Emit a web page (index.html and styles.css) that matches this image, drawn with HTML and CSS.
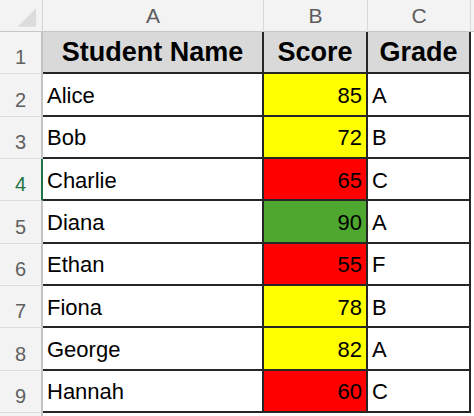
FILE: index.html
```html
<!DOCTYPE html>
<html>
<head>
<meta charset="utf-8">
<link rel="stylesheet" href="styles.css">
</head>
<body>
<div class="sheet">
  <div class="corner"><svg width="43" height="32" viewBox="0 0 43 32"><polygon points="37,8 37,27 18,27" fill="#dcdcdc"/></svg></div>
  <div class="colhead">A</div>
  <div class="colhead">B</div>
  <div class="colhead">C</div>
  <div class="colhead gut"></div>

  <div class="rowhead">1</div>
  <div class="cell hdr">Student Name</div>
  <div class="cell hdr">Score</div>
  <div class="cell hdr">Grade</div>
  <div class="gutter"></div>

  <div class="rowhead">2</div>
  <div class="cell">Alice</div>
  <div class="cell num yellow">85</div>
  <div class="cell">A</div>
  <div class="gutter"></div>

  <div class="rowhead">3</div>
  <div class="cell">Bob</div>
  <div class="cell num yellow">72</div>
  <div class="cell">B</div>
  <div class="gutter"></div>

  <div class="rowhead active">4</div>
  <div class="cell">Charlie</div>
  <div class="cell num red">65</div>
  <div class="cell">C</div>
  <div class="gutter"></div>

  <div class="rowhead">5</div>
  <div class="cell">Diana</div>
  <div class="cell num green">90</div>
  <div class="cell">A</div>
  <div class="gutter"></div>

  <div class="rowhead">6</div>
  <div class="cell">Ethan</div>
  <div class="cell num red">55</div>
  <div class="cell">F</div>
  <div class="gutter"></div>

  <div class="rowhead">7</div>
  <div class="cell">Fiona</div>
  <div class="cell num yellow">78</div>
  <div class="cell">B</div>
  <div class="gutter"></div>

  <div class="rowhead">8</div>
  <div class="cell">George</div>
  <div class="cell num yellow">82</div>
  <div class="cell">A</div>
  <div class="gutter"></div>

  <div class="rowhead">9</div>
  <div class="cell">Hannah</div>
  <div class="cell num red">60</div>
  <div class="cell">C</div>
  <div class="gutter"></div>

  <div class="rowhead tail"></div>
  <div class="blank"></div>
  <div class="blank"></div>
  <div class="blank"></div>
  <div class="blank"></div>
</div>
</body>
</html>
```
FILE: styles.css
```css
html, body {
  margin: 0;
  padding: 0;
  background: #ffffff;
}
.sheet {
  width: 474px;
  height: 416px;
  display: grid;
  grid-template-columns: 43px 221px 104px 103px 3px;
  grid-template-rows: 32px repeat(9, 42.33px) 1fr;
  font-family: "Liberation Sans", Arial, sans-serif;
  overflow: hidden;
}
.corner {
  background: #f3f3f3;
  border-right: 1px solid #d4d4d4;
  border-bottom: 1px solid #c6c6c6;
  box-sizing: border-box;
  display: flex;
}
.corner svg { display: block; }
.colhead {
  background: #f3f3f3;
  border-right: 1px solid #d9d9d9;
  border-bottom: 1px solid #c6c6c6;
  box-sizing: border-box;
  display: flex;
  align-items: center;
  justify-content: center;
  font-size: 21px;
  color: #5c5c5c;
  padding-top: 1px;
}
.colhead.gut { border-right: none; }
.rowhead {
  background: #f3f3f3;
  border-right: 2px solid #c4c4c4;
  border-bottom: 1px solid #dddddd;
  box-sizing: border-box;
  display: flex;
  align-items: flex-end;
  justify-content: center;
  padding-bottom: 4px;
  font-size: 20px;
  color: #606060;
}
.rowhead.active {
  color: #217346;
  border-right-color: #217346;
}
.rowhead.tail { border-bottom: none; }
.cell {
  box-sizing: border-box;
  border-right: 2px solid #262626;
  border-bottom: 2px solid #262626;
  display: flex;
  align-items: center;
  padding: 3px 4px 0 4px;
  font-size: 22px;
  color: #000000;
  white-space: nowrap;
  background: #ffffff;
}
.cell.hdr {
  background: #d9d9d9;
  font-weight: bold;
  font-size: 27px;
  justify-content: center;
  padding-top: 0;
}
.cell.num { justify-content: flex-end; }
.yellow { background: #ffff00; }
.red { background: #ff0000; }
.green { background: #4ea72e; }
.gutter { background: #ffffff; }
.blank { background: #ffffff; }
```
